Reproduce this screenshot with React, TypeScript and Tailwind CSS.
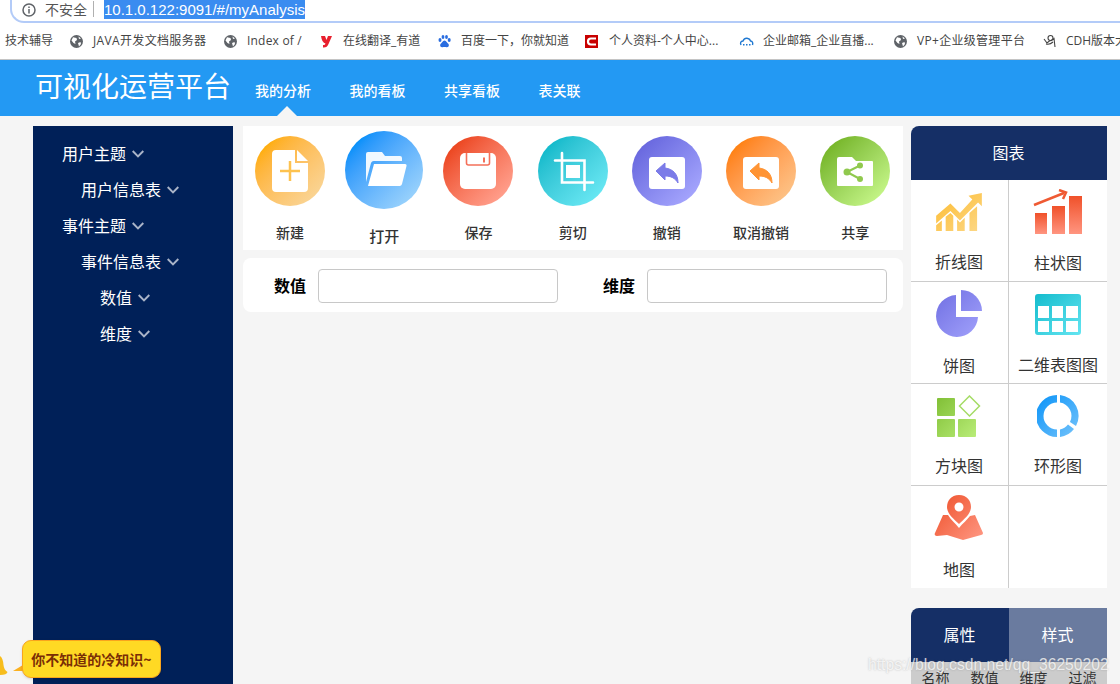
import React from "react";

const CJK = "font-['Noto_Sans_CJK_SC','Liberation_Sans',sans-serif]";

const Globe = () => (
  <svg width="13" height="13" viewBox="0 0 13 13">
    <circle cx="6.5" cy="6.5" r="6.5" fill="#5f6368" />
    <path d="M3 2.2 L6.5 3 L7 5 L5 6.5 L5.5 9 L3.5 8 L1.5 5.5z M8 8 L10.5 7 L11 9 L9 11.5z M8.5 1.5 L11 3.5 L9 4z" fill="#fff" />
  </svg>
);

const bookmarks: { label: string; icon?: React.ReactNode; gap: string; text: string }[] = [
  { label: "技术辅导", gap: "ml-[5px]", text: "w-[48px]" },
  { label: "JAVA开发文档服务器", icon: <Globe />, gap: "ml-[17px]", text: "ml-[10px] w-[114px] tracking-[0.35px]" },
  { label: "Index of /", icon: <Globe />, gap: "ml-[17px]", text: "ml-[10px] w-[55px] tracking-[0.2px]" },
  {
    label: "在线翻译_有道",
    gap: "ml-[18px]",
    text: "ml-[10px] w-[78px]",
    icon: (
      <svg width="13" height="13" viewBox="0 0 13 13">
        <path d="M1 1 H5 L6.5 5 L8 1 H12 L8.5 9 Q7 13 3 12.5 L3 10 Q5 10.5 5.5 8.5 Q2 8 1 1z" fill="#e8202e" />
      </svg>
    ),
  },
  {
    label: "百度一下，你就知道",
    gap: "ml-[17px]",
    text: "ml-[10px] w-[108px]",
    icon: (
      <svg width="13" height="13" viewBox="0 0 13 13" fill="#2a6de0">
        <ellipse cx="2" cy="5" rx="1.5" ry="2" />
        <ellipse cx="5" cy="2" rx="1.4" ry="2" />
        <ellipse cx="8.5" cy="2" rx="1.4" ry="2" />
        <ellipse cx="11.2" cy="5" rx="1.5" ry="2" />
        <path d="M6.5 5.5 C4.5 5.5 4 8 2.5 9 C1.5 10.5 2.5 12.5 4.5 12.3 C5.5 12 7.5 12 8.5 12.3 C10.5 12.5 11.5 10.5 10.5 9 C9 8 8.5 5.5 6.5 5.5z" />
      </svg>
    ),
  },
  {
    label: "个人资料-个人中心...",
    gap: "ml-[16px]",
    text: "ml-[11px] w-[111px]",
    icon: (
      <svg width="13" height="13" viewBox="0 0 13 13">
        <rect width="13" height="13" fill="#c80000" />
        <path d="M11 3.5 H6 Q3 3.5 3 6.5 Q3 9.5 6 9.5 H11" fill="none" stroke="#fff" strokeWidth="2.2" />
      </svg>
    ),
  },
  {
    label: "企业邮箱_企业直播...",
    gap: "ml-[19px]",
    text: "ml-[9px] w-[111px]",
    icon: (
      <svg width="15" height="13" viewBox="0 0 15 13">
        <path d="M2 10 Q0.5 6.5 4 6 Q5.5 2.5 9 3.5 Q11 4 11.5 6 Q14.5 6.5 13.5 10" fill="none" stroke="#1f78d1" strokeWidth="1.4" />
        <path d="M4 9 h1.5 v1.5 h-1.5z M7 9 h1.5 v1.5 h-1.5z M10 9 h1.5 v1.5 h-1.5z" fill="#1f78d1" />
      </svg>
    ),
  },
  { label: "VP+企业级管理平台", icon: <Globe />, gap: "ml-[20px]", text: "ml-[10px] w-[108px] tracking-[0.3px]" },
  {
    label: "CDH版本大全",
    gap: "ml-[18px]",
    text: "ml-[10px]",
    icon: (
      <svg width="13" height="14" viewBox="0 0 13 14" fill="none" stroke="#444" strokeWidth="1.1">
        <circle cx="7.5" cy="4" r="2.5" />
        <path d="M1 5 L4 9 L7 6.5 M7.5 7 L11 4.5 L12 13 M3 10 Q7 11 10 8" />
      </svg>
    ),
  },
];

const Browser = () => (
  <div className="h-[60px] bg-white border-b border-[#c4c4c4] shrink-0">
    <div className="h-[23px] pl-[10px] overflow-hidden">
      <div className="h-[23px] flex items-center pl-[9px] border-b-2 border-l-2 border-[#b3cbf8] rounded-bl-[14px] text-[14px] text-[#555]">
        <svg width="16" height="16" viewBox="0 0 16 16" fill="none" className="mb-[2px]">
          <circle cx="8" cy="8" r="6" stroke="#5f6368" strokeWidth="1.5" />
          <path d="M8 7 V11.5 M8 4.5 V6" stroke="#5f6368" strokeWidth="1.5" />
        </svg>
        <span className="ml-[8px] mb-[3px]">不安全</span>
        <span className="ml-[6px] mb-[3px] w-px h-[16px] bg-[#b0b0b0]" />
        <span className="ml-[10px] mb-[3px] h-[19px] leading-[19px] bg-[#3a8cf0] text-white text-[15px] font-['Liberation_Sans',sans-serif] whitespace-nowrap">
          10.1.0.122:9091/#/myAnalysis
        </span>
      </div>
    </div>
    <div className="h-[36px] flex items-center text-[12px] text-[#444] whitespace-nowrap overflow-hidden font-['Open_Sans','Noto_Sans_CJK_SC',sans-serif]">
      {bookmarks.map((b) => (
        <div key={b.label} className={`flex items-center shrink-0 ${b.gap}`}>
          {b.icon}
          <span className={b.text}>{b.label}</span>
        </div>
      ))}
    </div>
  </div>
);

const navItems = ["我的分析", "我的看板", "共享看板", "表关联"];

const Header = () => (
  <div className="h-[56px] bg-[#2399f3] flex items-center pl-[35px] shrink-0 relative">
    <div className="text-[28px] text-white leading-[44px] w-[197px] mb-[6px]">可视化运营平台</div>
    <div className="flex ml-[23px] gap-[38.5px] text-[14px] font-medium text-white mt-[4px]">
      {navItems.map((n) => (
        <span key={n}>{n}</span>
      ))}
    </div>
    <div className="absolute left-[277px] bottom-0 w-0 h-0 border-l-[10px] border-r-[10px] border-b-[10px] border-l-transparent border-r-transparent border-b-[#f5f5f5]" />
  </div>
);

const treeItems = [
  { label: "用户主题", indent: "pl-[29px]" },
  { label: "用户信息表", indent: "pl-[48px]" },
  { label: "事件主题", indent: "pl-[29px]" },
  { label: "事件信息表", indent: "pl-[48px]" },
  { label: "数值", indent: "pl-[67px]" },
  { label: "维度", indent: "pl-[67px]" },
];

const Sidebar = () => (
  <div className="w-[200px] shrink-0 bg-[#002058] pt-[9px]">
    {treeItems.map((t) => (
      <div key={t.label} className={`h-[36px] flex items-center text-[16px] text-white ${t.indent}`}>
        <span>{t.label}</span>
        <svg width="12" height="8" viewBox="0 0 12 8" fill="none" className="ml-[6px] mt-[1px]">
          <path d="M0.7 1 L6 6.5 L11.3 1" stroke="#aab4c8" strokeWidth="1.9" />
        </svg>
      </div>
    ))}
  </div>
);

const circleIcons = {
  add: (
    <svg width="70" height="70" viewBox="0 0 70 70">
      <path d="M21 14 H40 V27 H53 V52 a4 4 0 0 1-4 4 H21 a4 4 0 0 1-4-4 V18 a4 4 0 0 1 4-4z" fill="#fff" />
      <path d="M42 14 L53 25 H42z" fill="#fff" />
      <path d="M25 35 H45 M35 25 V45" stroke="#fdc24f" strokeWidth="2.5" />
    </svg>
  ),
  open: (
    <svg width="78" height="78" viewBox="0 0 78 78" fill="#fff">
      <path d="M23 21 h14 l3 4 h15 a2 2 0 0 1 2 2 v3 H29 a3 3 0 0 0-3 2 l-5 19 V23 a2 2 0 0 1 2-2z" opacity="0.92" />
      <path d="M29 33 H60 a1.5 1.5 0 0 1 1.5 2 L57 53 a2.5 2.5 0 0 1-2 2 H23z" />
    </svg>
  ),
  save: (
    <svg width="70" height="70" viewBox="0 0 70 70">
      <rect x="17" y="17" width="36" height="36" rx="5" fill="#fff" />
      <path d="M23.5 17 V27 a2 2 0 0 0 2 2 H44.5 a2 2 0 0 0 2-2 V17" fill="none" stroke="#f4705a" strokeWidth="1.6" />
      <rect x="40" y="21.5" width="2" height="5" fill="#f4705a" />
    </svg>
  ),
  crop: (
    <svg width="70" height="70" viewBox="0 0 70 70" fill="none">
      <path d="M17 24.5 H46.5 V54 M24 17 V46.5 H55" stroke="#fff" strokeWidth="2.6" strokeLinecap="round" />
      <rect x="28" y="29" width="14" height="13" fill="#fff" />
    </svg>
  ),
  undo: (
    <svg width="70" height="70" viewBox="0 0 70 70">
      <rect x="17" y="21" width="36" height="32" rx="3" fill="#fff" />
      <path d="M24 35 L33 27 V32 C41 33 46 38 46 47 C43 42 39 40 33 40 V44z" fill="#7b7be8" stroke="#7b7be8" strokeWidth="1" strokeLinejoin="round" />
    </svg>
  ),
  redo: (
    <svg width="70" height="70" viewBox="0 0 70 70">
      <rect x="17" y="21" width="36" height="32" rx="3" fill="#fff" />
      <path d="M24 35 L33 27 V32 C41 33 46 38 46 47 C43 42 39 40 33 40 V44z" fill="#ff9434" stroke="#ff9434" strokeWidth="1" strokeLinejoin="round" />
    </svg>
  ),
  share: (
    <svg width="70" height="70" viewBox="0 0 70 70">
      <path d="M17 23 a2 2 0 0 1 2-2 H32 L36 25 H52 a1 1 0 0 1 1 1 V49 a1 1 0 0 1-1 1 H18 a1 1 0 0 1-1-1z" fill="#fff" />
      <circle cx="27" cy="36" r="3.5" fill="#90c94e" />
      <circle cx="40" cy="29.5" r="3" fill="#90c94e" />
      <circle cx="40" cy="43" r="3" fill="#90c94e" />
      <path d="M27 36 L40 29.5 M27 36 L40 43" stroke="#90c94e" strokeWidth="2" />
    </svg>
  ),
};

const tools = [
  { label: "新建", icon: circleIcons.add, bg: "from-[#ffae0a] to-[#fad391]" },
  { label: "打开", icon: circleIcons.open, bg: "from-[#0691fa] to-[#96d0fc]", big: true },
  { label: "保存", icon: circleIcons.save, bg: "from-[#ec4720] to-[#ff9d8a]" },
  { label: "剪切", icon: circleIcons.crop, bg: "from-[#12bbcc] to-[#66e6f2]" },
  { label: "撤销", icon: circleIcons.undo, bg: "from-[#6a69df] to-[#a3a3fc]" },
  { label: "取消撤销", icon: circleIcons.redo, bg: "from-[#ff8212] to-[#fdc083]" },
  { label: "共享", icon: circleIcons.share, bg: "from-[#78b72a] to-[#c2f384]" },
];

const Toolbar = () => (
  <div className="h-[124px] bg-white grid grid-cols-[repeat(7,94.2px)]">
    {tools.map((t) =>
      t.big ? (
        <div key={t.label} className="flex flex-col items-center pt-[5px]">
          <div className={`w-[78px] h-[78px] rounded-full bg-linear-to-br from-15% to-85% ${t.bg}`}>{t.icon}</div>
          <div className="mt-[17px] text-[15px] leading-[20px] font-medium text-[#333]">{t.label}</div>
        </div>
      ) : (
        <div key={t.label} className="flex flex-col items-center pt-[10px]">
          <div className={`w-[70px] h-[70px] rounded-full bg-linear-to-br from-15% to-85% ${t.bg}`}>{t.icon}</div>
          <div className="mt-[16px] text-[14px] leading-[20px] font-medium text-[#333]">{t.label}</div>
        </div>
      )
    )}
  </div>
);

const FormRow = () => (
  <div className="h-[54px] mt-[8px] bg-white rounded-[8px] flex items-center pl-[31px] text-[16px] font-bold text-black">
    <span>数值</span>
    <input className="ml-[12px] mt-[2px] w-[240px] h-[34px] border border-[#c8c8c8] rounded-[4px] bg-white" />
    <span className="ml-[45px]">维度</span>
    <input className="ml-[12px] mt-[2px] w-[240px] h-[34px] border border-[#c8c8c8] rounded-[4px] bg-white" />
  </div>
);

const chartIcons = {
  line: (
    <svg width="48" height="40" viewBox="0 0 50 42">
      <defs>
        <linearGradient id="gLine" x1="0" y1="0" x2="1" y2="1">
          <stop offset="0" stopColor="#fdbb2f" />
          <stop offset="1" stopColor="#fcd888" />
        </linearGradient>
      </defs>
      <path d="M1 25 L16 12 L26 22 L39 8 L35 4 L49 1 L49 15 L45 11 L26 30 L16 20 L1 33z M1 35 L7 30 V41 H1z M11 26 L16 22 L19 25 V41 H11z M23 29 L26 32 L31 27 V41 H23z M36 22 L44 15 V41 H36z" fill="url(#gLine)" />
    </svg>
  ),
  bar: (
    <svg width="50" height="46" viewBox="0 0 50 46">
      <defs>
        <linearGradient id="gBar" x1="0" y1="0" x2="0" y2="1">
          <stop offset="0" stopColor="#f0512a" />
          <stop offset="1" stopColor="#ff9580" />
        </linearGradient>
      </defs>
      <rect x="2" y="24" width="12" height="21" fill="url(#gBar)" />
      <rect x="19" y="17" width="13" height="28" fill="url(#gBar)" />
      <rect x="36" y="7" width="13" height="38" fill="url(#gBar)" />
      <path d="M1 16 L31 4" stroke="#ef5a33" strokeWidth="2.5" />
      <path d="M26 1 L33 3.5 L30 10" fill="none" stroke="#ef5a33" strokeWidth="2.5" />
    </svg>
  ),
  pie: (
    <svg width="48" height="48" viewBox="0 0 48 48">
      <defs>
        <linearGradient id="gPie" gradientUnits="userSpaceOnUse" x1="0" y1="0" x2="48" y2="48">
          <stop offset="0" stopColor="#6f6ee2" />
          <stop offset="1" stopColor="#a4a4fc" />
        </linearGradient>
      </defs>
      <path d="M21 5 V27 H43 A21 21 0 1 1 21 5z" fill="url(#gPie)" />
      <path d="M26 0 A21 21 0 0 1 47 21 H26z" fill="url(#gPie)" />
    </svg>
  ),
  table: (
    <svg width="46" height="41" viewBox="0 0 46 41">
      <defs>
        <linearGradient id="gTable" x1="0" y1="0" x2="1" y2="1">
          <stop offset="0" stopColor="#14bccd" />
          <stop offset="1" stopColor="#64e5f1" />
        </linearGradient>
      </defs>
      <path fillRule="evenodd" clipRule="evenodd" d="M3 0 H43 a3 3 0 0 1 3 3 V38 a3 3 0 0 1-3 3 H3 a3 3 0 0 1-3-3 V3 a3 3 0 0 1 3-3z M3 12 V24 H14 V12z M17 12 V24 H28 V12z M31 12 V24 H43 V12z M3 27 V38 H14 V27z M17 27 V38 H28 V27z M31 27 V38 H43 V27z" fill="url(#gTable)" />
    </svg>
  ),
  block: (
    <svg width="44" height="43" viewBox="0 0 44 43">
      <defs>
        <linearGradient id="gBlock" gradientUnits="userSpaceOnUse" x1="0" y1="0" x2="44" y2="43">
          <stop offset="0" stopColor="#7fbe34" />
          <stop offset="1" stopColor="#bdf07d" />
        </linearGradient>
      </defs>
      <rect x="0" y="3" width="18" height="18" rx="1" fill="url(#gBlock)" />
      <rect x="0" y="24" width="18" height="18" rx="1" fill="url(#gBlock)" />
      <rect x="21" y="24" width="18" height="18" rx="1" fill="url(#gBlock)" />
      <path d="M32.5 1 L42.5 11 L32.5 21 L22.5 11z" fill="none" stroke="#a5dc66" strokeWidth="1.5" />
    </svg>
  ),
  ring: (
    <svg width="42" height="42" viewBox="0 0 42 42">
      <defs>
        <linearGradient id="gRing" gradientUnits="userSpaceOnUse" x1="0" y1="0" x2="42" y2="42">
          <stop offset="0" stopColor="#0a93f8" />
          <stop offset="1" stopColor="#76c4fb" />
        </linearGradient>
      </defs>
      <path d="M20 0 V7.5 A13.5 13.5 0 0 0 20 34.5 V42 A21 21 0 0 1 20 0z" fill="url(#gRing)" />
      <path d="M23 0 A21 21 0 0 1 39 31 L33 27 A13.5 13.5 0 0 0 23 7.5z" fill="url(#gRing)" />
      <path d="M23 42 A21 21 0 0 0 37 34 L31 29.5 A13.5 13.5 0 0 1 23 34.5z" fill="url(#gRing)" />
    </svg>
  ),
  map: (
    <svg width="50" height="46" viewBox="0 0 50 46">
      <defs>
        <linearGradient id="gMap" gradientUnits="userSpaceOnUse" x1="0" y1="0" x2="50" y2="46">
          <stop offset="0" stopColor="#ee4f28" />
          <stop offset="1" stopColor="#ff9a86" />
        </linearGradient>
      </defs>
      <path fillRule="evenodd" d="M25 0 C33 0 37 6 37 12 C37 19 30 24 25 29 C20 24 13 19 13 12 C13 6 17 0 25 0z M25 7.5 A4.5 4.5 0 1 0 25 16.5 A4.5 4.5 0 1 0 25 7.5z" fill="url(#gMap)" />
      <path d="M9 20 L14 20 C17 25 21 28 25 33 C29 28 33 25 36 21 L41 20 L49 38 C49 39 48 40 47 40 L29 45 L13 40 L3 41 C1 41 0 39 1 38z" fill="url(#gMap)" />
    </svg>
  ),
};

const charts = [
  { label: "折线图", icon: chartIcons.line, labelClass: "mt-[6px]" },
  { label: "柱状图", icon: chartIcons.bar, labelClass: "mt-[7px]" },
  { label: "饼图", icon: chartIcons.pie, labelClass: "mt-[8px]" },
  { label: "二维表图图", icon: chartIcons.table, labelClass: "mt-[7px]" },
  { label: "方块图", icon: chartIcons.block, labelClass: "mt-[6px]" },
  { label: "环形图", icon: chartIcons.ring, labelClass: "mt-[6px]" },
  { label: "地图", icon: chartIcons.map, labelClass: "mt-[8px]" },
  { label: "", icon: null, labelClass: "" },
];

const RightPanel = () => (
  <div className="w-[196px] shrink-0">
    <div className="h-[54px] pb-[2px] pr-[1px] bg-[#152f66] rounded-tl-[8px] flex items-center justify-center text-[16px] text-white">
      图表
    </div>
    <div className="grid grid-cols-2 bg-white">
      {charts.map((c, i) => (
        <div
          key={i}
          className={`h-[102px] flex flex-col items-center border-[#ccc] ${i % 2 === 0 ? "border-r pr-[1px]" : ""} ${i < 6 ? "border-b" : ""}`}
        >
          <div className="h-[64px] flex items-center justify-center shrink-0">{c.icon}</div>
          <div className={`text-[16px] leading-[22px] text-[#333] whitespace-nowrap ${c.labelClass}`}>{c.label}</div>
        </div>
      ))}
    </div>
    <div className="mt-[20px] flex h-[54px] text-[16px] text-white">
      <div className="w-[98px] pb-[2px] pr-[1px] bg-[#152f66] rounded-tl-[8px] flex items-center justify-center">属性</div>
      <div className="w-[98px] pb-[2px] pr-[1px] bg-[#6a7b9f] flex items-center justify-center">样式</div>
    </div>
    <div className="h-[22px] bg-[#cccccc] grid grid-cols-4 text-[14px] text-[#333] text-center leading-[30px]">
      <span>名称</span>
      <span>数值</span>
      <span>维度</span>
      <span>过滤</span>
    </div>
  </div>
);

const Tip = () => (
  <>
    <svg width="12" height="8" viewBox="0 0 12 8" className="absolute left-[12px] top-[664px]">
      <path d="M1 7 L11 1 V7z" fill="#fbb11f" />
    </svg>
    <div className="absolute left-[22px] top-[640px] w-[139px] h-[38px] bg-[#ffd924] border-[1.5px] border-[#f9a41c] rounded-[9px] flex items-center justify-center text-[14px] font-bold text-[#7a2e06] shadow-sm whitespace-nowrap">
      你不知道的冷知识~
    </div>
    <svg width="8" height="20" viewBox="0 0 8 20" className="absolute left-0 top-[656px]">
      <path d="M0 0 Q3 2 3.5 9 Q4 14 7.5 16 Q7 19 0 19z" fill="#f7bd1c" />
    </svg>
  </>
);

export default function App() {
  return (
    <div className={`w-[1120px] h-[684px] overflow-hidden flex flex-col bg-[#f5f5f5] relative ${CJK}`}>
      <Browser />
      <Header />
      <div className="flex-1 min-h-0 flex pt-[10px] pl-[33px] gap-[10px]">
        <Sidebar />
        <div className="w-[660px] shrink-0">
          <Toolbar />
          <FormRow />
        </div>
        <div className="-ml-[2px]">
          <RightPanel />
        </div>
      </div>
      <Tip />
      <div className="absolute left-[868px] top-[656px] text-[15.7px] leading-[18px] text-white/75 font-['Liberation_Sans',sans-serif] [text-shadow:0_0_2px_rgba(110,110,110,0.45)] whitespace-nowrap">
        https://blog.csdn.net/qq_36250202
      </div>
    </div>
  );
}
